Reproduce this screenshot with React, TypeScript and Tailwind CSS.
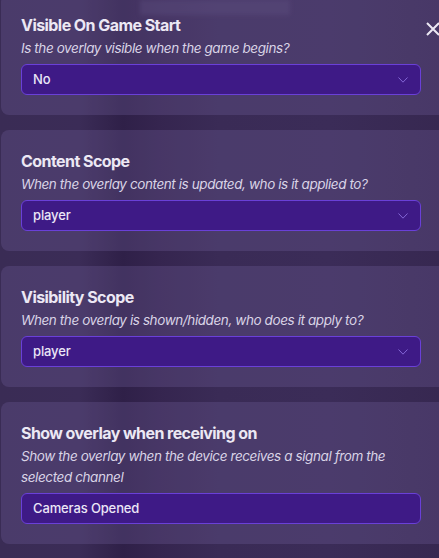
import React from "react";

interface FieldProps {
  title: string;
  description: string;
  value: string;
  dropdown?: boolean;
}

const Chevron = () => (
  <svg width="10" height="6" viewBox="0 0 10 6" fill="none" className="text-[#8466d6]">
    <path d="M0.5 0.5L5 5.2L9.5 0.5" stroke="currentColor" strokeWidth="1" />
  </svg>
);

const Field: React.FC<FieldProps> = ({ title, description, value, dropdown = true }) => (
  <div className="w-[470px] ml-px rounded-[8px] bg-[rgba(120,100,160,0.28)] pt-[21px] pb-[20px] pl-[20px]">
    <div className="text-[16px] leading-[20px] font-bold tracking-[-0.035em] text-[#ece8f4]">
      {title}
    </div>
    <div className="mt-[3px] w-[400px] text-[13.5px] leading-[21px] italic tracking-[-0.03em] text-[#d9d3e6]">
      {description}
    </div>
    <div className="mt-[5px] w-[400px] h-[31px] flex items-center justify-between rounded-[6px] border border-[#6a40d8] bg-[#3e1a86] pl-[11px] pr-[12px]">
      <span className="text-[13px] font-medium tracking-[-0.01em] text-[#ebe6f6]">{value}</span>
      {dropdown && <Chevron />}
    </div>
  </div>
);

export default function App() {
  return (
    <div className="relative w-[439px] h-[558px] overflow-hidden font-['Inter','Liberation_Sans',sans-serif] bg-[linear-gradient(90deg,#3a2c55_0%,#3b2c57_18%,#2f2048_28%,#35254f_36%,#3a2b56_50%,#3b2c58_75%,#372851_100%)]">
      <div className="absolute left-[140px] top-0 w-[150px] h-[15px] bg-[rgba(90,75,120,0.35)] blur-[2px]" />
      <div className="relative flex flex-col gap-[15px] -mt-[6px]">
        <Field
          title="Visible On Game Start"
          description="Is the overlay visible when the game begins?"
          value="No"
        />
        <Field
          title="Content Scope"
          description="When the overlay content is updated, who is it applied to?"
          value="player"
        />
        <Field
          title="Visibility Scope"
          description="When the overlay is shown/hidden, who does it apply to?"
          value="player"
        />
        <Field
          title="Show overlay when receiving on"
          description="Show the overlay when the device receives a signal from the selected channel"
          value="Cameras Opened"
          dropdown={false}
        />
      </div>
      <button className="absolute left-[425px] top-[21px] text-[#ece8f4]">
        <svg width="16" height="16" viewBox="0 0 16 16" fill="none">
          <path d="M2 2L14 14M14 2L2 14" stroke="currentColor" strokeWidth="2" />
        </svg>
      </button>
    </div>
  );
}
